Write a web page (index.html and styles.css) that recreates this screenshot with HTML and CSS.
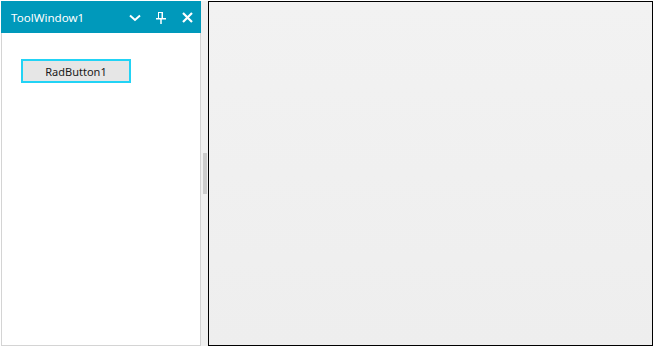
FILE: index.html
```html
<!DOCTYPE html>
<html>
<head>
<meta charset="utf-8">
<link rel="stylesheet" href="styles.css">
</head>
<body>
<div class="form">
  <div class="toolwindow">
    <div class="header">
      <span class="title">ToolWindow1</span>
      <div class="actions">
        <svg class="icon chevron" width="12" height="8" viewBox="0 0 12 8">
          <polyline points="1,1.5 6,6 11,1.5" fill="none" stroke="#fff" stroke-width="2"/>
        </svg>
        <svg class="icon pin" width="10" height="12" viewBox="0 0 10 12">
          <rect x="2.5" y="0.5" width="4" height="6" fill="none" stroke="#fff" stroke-width="1"/>
          <rect x="5.5" y="0.5" width="1.5" height="6" fill="#fff"/>
          <rect x="0" y="6" width="10" height="1.5" fill="#fff"/>
          <rect x="4.25" y="7" width="1.5" height="5" fill="#fff"/>
        </svg>
        <svg class="icon close" width="11" height="11" viewBox="0 0 11 11">
          <path d="M1,1 L10,10 M10,1 L1,10" fill="none" stroke="#fff" stroke-width="2.2"/>
        </svg>
      </div>
    </div>
    <div class="content">
      <button class="radbutton">RadButton1</button>
    </div>
  </div>
  <div class="splitter"><div class="grip"></div></div>
  <div class="panel"></div>
</div>
</body>
</html>
```
FILE: styles.css
```css
html, body {
  margin: 0;
  padding: 0;
  background: #ffffff;
}
.form {
  width: 654px;
  height: 347px;
  box-sizing: border-box;
  padding: 1px 1px 1px 1px;
  display: flex;
  font-family: "Segoe UI", "Noto Sans", sans-serif;
}
.toolwindow {
  width: 200px;
  box-sizing: border-box;
  border: 1px solid #d4d4d4;
  border-top: none;
  display: flex;
  flex-direction: column;
  background: #fff;
}
.header {
  height: 32px;
  background: #0099bb;
  display: flex;
  align-items: center;
  padding: 1px 0 0 10px;
  box-sizing: border-box;
  margin: 0 -1px;
  color: #fff;
}
.title {
  font-size: 11.6px;
  flex: 1;
}
.actions {
  display: flex;
  align-items: center;
  height: 30px;
}
.icon { display: block; }
.chevron { margin-right: 15px; margin-top: 1px; }
.pin { margin-right: 16px; }
.close { margin-right: 8px; }
.content {
  flex: 1;
  padding: 26px 0 0 19px;
}
.radbutton {
  display: block;
  width: 110px;
  height: 24px;
  box-sizing: border-box;
  border: 2px solid #22d3f5;
  background: #e6e6e6;
  font-family: "Segoe UI", "Noto Sans", sans-serif;
  font-size: 11px;
  color: #1a1a1a;
  padding: 0;
}
.splitter {
  width: 7px;
  background: #f0f0f0;
  display: flex;
  align-items: center;
  justify-content: center;
}
.grip {
  width: 4px;
  height: 41px;
  background: #cccccc;
  margin-left: 1px;
}
.panel {
  flex: 1;
  border: 1px solid #000;
  background: linear-gradient(#f2f2f2, #eeeeee);
}
```
